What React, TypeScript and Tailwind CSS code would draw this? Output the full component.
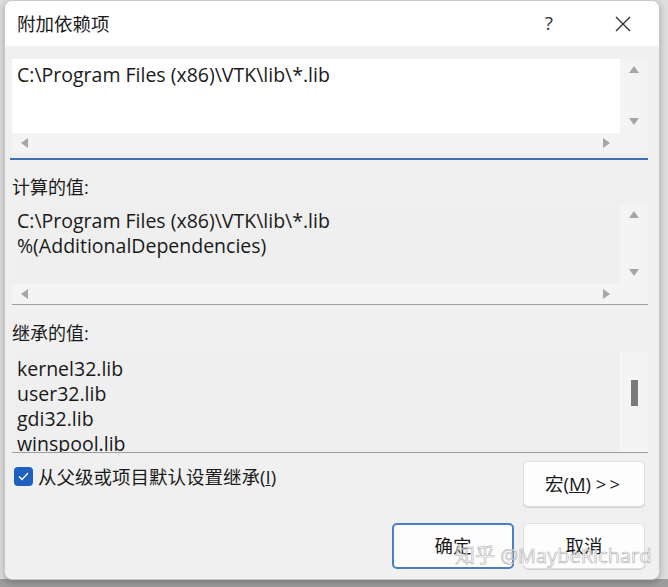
import React from 'react';

const latin = '[font-family:"Open_Sans","Noto_Sans_CJK_SC",sans-serif]';

const Tri: React.FC<{ dir: 'up' | 'down' | 'left' | 'right' }> = ({ dir }) => {
  const pts = {
    up: '0,8 5,1 10,8',
    down: '0,1 5,8 10,1',
    left: '8,0 1,5 8,10',
    right: '1,0 8,5 1,10',
  }[dir];
  return (
    <svg width="10" height="10" viewBox="0 0 10 10">
      <polygon points={pts} fill="#a6a6a6" />
    </svg>
  );
};

const TextBox: React.FC<{
  lines: string[];
  white?: boolean;
  heightClass: string;
  padClass?: string;
  hscroll?: boolean;
  thumb?: boolean;
}> = ({ lines, white, heightClass, padClass = 'pt-[2px]', hscroll = true, thumb }) => (
  <div className="flex flex-col bg-[#f4f4f4]">
    <div className="flex">
      <div
        className={`flex-1 ${heightClass} ${padClass} overflow-hidden pl-[5px] text-[19.5px] leading-[25px] text-[#1a1a1a] ${latin} ${
          white ? 'bg-white' : 'bg-[#efefef]'
        }`}
      >
        {lines.map((l, i) => (
          <div key={i} className="whitespace-pre">
            {l}
          </div>
        ))}
      </div>
      <div
        className={`w-[28px] flex flex-col items-center ${
          thumb ? 'justify-start pt-[28px] border-l border-[#fafafa]' : 'justify-between py-[6px]'
        }`}
      >
        {thumb ? (
          <div className="w-[7px] h-[26px] bg-[#7a7a7a]" />
        ) : (
          <>
            <Tri dir="up" />
            <Tri dir="down" />
          </>
        )}
      </div>
    </div>
    {hscroll && (
      <div className="h-[20px] flex items-center justify-between pl-[8px] pr-[36px]">
        <Tri dir="left" />
        <Tri dir="right" />
      </div>
    )}
  </div>
);

const Button: React.FC<{ children: React.ReactNode; primary?: boolean; className?: string }> = ({
  children,
  primary,
  className = '',
}) => (
  <div
    className={`w-[122px] h-[46px] flex items-center justify-center rounded-[5px] bg-[#fdfdfd] text-[18.5px] text-[#1a1a1a] ${latin} ${
      primary ? 'border-2 border-[#4a7fc4]' : 'border border-[#e0e0e0] shadow-[0_1px_0_#d0d0d0]'
    } ${className}`}
  >
    {children}
  </div>
);

export default function App() {
  return (
    <div className="relative w-[668px] h-[587px] overflow-hidden bg-[#dedede]">
      <div className="absolute left-0 right-0 bottom-0 h-[8px] bg-[#9c9c9c]" />
      <div className="relative ml-[4px] w-[656px] h-[580px] rounded-[8px] bg-[#f0f0f0] border border-[#c8c8c8] shadow-[0_2px_6px_rgba(0,0,0,0.25)] overflow-hidden flex flex-col">
        {/* title bar */}
        <div className="h-[45px] bg-white flex items-center pl-[12px] pr-[16px]">
          <span className={`text-[18.5px] text-[#1a1a1a] ${latin}`}>附加依赖项</span>
          <span className={`ml-auto mr-[62px] text-[19px] text-[#333] ${latin}`}>?</span>
          <svg width="16" height="16" viewBox="0 0 16 16" className="mr-[12px]">
            <path d="M1 1L15 15M15 1L1 15" stroke="#333" strokeWidth="1.4" />
          </svg>
        </div>

        <div className="flex flex-col pl-[7px] pr-[11px] pt-[13px]">
          {/* edit box */}
          <TextBox
            lines={['C:\\Program Files (x86)\\VTK\\lib\\*.lib']}
            white
            heightClass="h-[74px]"
            padClass="pt-[3px]"
          />
          <div className="mt-[5px] ml-[-2px] h-[2px] bg-[#3f6fb5]" />

          {/* computed value */}
          <div className={`mt-[15px] text-[18px] leading-[24px] text-[#1a1a1a] ${latin}`}>计算的值:</div>
          <div className="mt-[5px] border-b border-[#9e9e9e]">
            <TextBox
              lines={['C:\\Program Files (x86)\\VTK\\lib\\*.lib', '%(AdditionalDependencies)']}
              heightClass="h-[80px]"
              padClass="pt-[4px]"
            />
          </div>

          {/* inherited value */}
          <div className={`mt-[16px] text-[18px] leading-[24px] text-[#1a1a1a] ${latin}`}>继承的值:</div>
          <div className="mt-[7px] border-b border-[#9e9e9e]">
            <TextBox
              lines={['kernel32.lib', 'user32.lib', 'gdi32.lib', 'winspool.lib']}
              heightClass="h-[100px]"
              padClass="pt-[4px]"
              hscroll={false}
              thumb
            />
          </div>

          {/* checkbox + macro */}
          <div className="mt-[8px] flex items-start">
            <div className="mt-[6px] ml-[2px] w-[19px] h-[19px] rounded-[4px] bg-[#1f5fbf] flex items-center justify-center">
              <svg width="11" height="9" viewBox="0 0 11 9">
                <path d="M1 4.5L4 7.5L10 1" fill="none" stroke="white" strokeWidth="1.3" />
              </svg>
            </div>
            <span className={`ml-[5px] mt-[2px] text-[18.5px] text-[#1a1a1a] ${latin}`}>
              从父级或项目默认设置继承(<span className="underline">I</span>)
            </span>
            <Button className="ml-auto mr-[3px]">
              <span>
                宏(<span className="underline">M</span>) <span className="tracking-[3px]">&gt;&gt;</span>
              </span>
            </Button>
          </div>

          {/* ok / cancel */}
          <div className="mt-[16px] flex justify-end gap-[9px] pr-[3px]">
            <Button primary>确定</Button>
            <Button>取消</Button>
          </div>
        </div>
      </div>

      {/* watermark */}
      <div
        className={`absolute left-[455px] top-[541px] text-[20px] text-white/60 ${latin} [-webkit-text-stroke:0.6px_#b0b0b0] pointer-events-none`}
      >
        知乎 @MaybeRichard
      </div>
    </div>
  );
}
